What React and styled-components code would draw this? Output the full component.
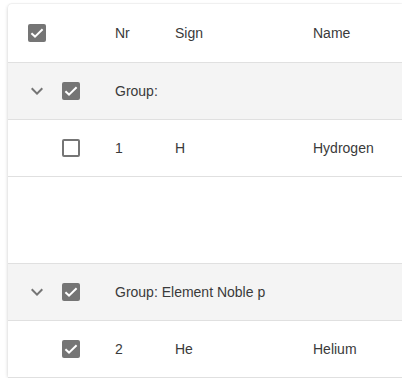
import React from 'react';
import styled, { createGlobalStyle } from 'styled-components';

const GlobalStyle = createGlobalStyle`
  body {
    margin: 0;
    overflow: hidden;
    background: #ffffff;
    font-family: 'Liberation Sans', Arial, sans-serif;
  }
`;

const Card = styled.div`
  margin: 4px 0 0 8px;
  width: 394px;
  background: #ffffff;
  border-radius: 4px 0 0 4px;
  box-shadow: -1px 1px 3px rgba(0, 0, 0, 0.12), 0 -1px 1px rgba(0, 0, 0, 0.05);
  font-size: 14px;
  color: #3a3a3a;
`;

const HeaderRow = styled.div`
  display: grid;
  grid-template-columns: 87px 60px 138px 1fr;
  align-items: center;
  height: 58px;
  padding-left: 20px;
  border-bottom: 1px solid #e0e0e0;
`;

const Row = styled.div`
  display: grid;
  grid-template-columns: 54px 53px 60px 138px 1fr;
  align-items: center;
  height: 56px;
  background: ${(p) => (p.group ? '#f4f4f4' : '#ffffff')};
  border-bottom: 1px solid #e0e0e0;
`;

const Spacer = styled.div`
  height: 86px;
  border-bottom: 1px solid #e0e0e0;
`;

const Cell = styled.div`
  white-space: nowrap;
  overflow: hidden;
`;

const GroupLabel = styled.div`
  grid-column: 3 / span 3;
  white-space: nowrap;
  overflow: hidden;
`;

const Expand = styled.div`
  display: flex;
  align-items: center;
  padding-left: 17px;
`;

const Box = styled.span`
  display: inline-flex;
  align-items: center;
  justify-content: center;
  vertical-align: middle;
  width: 18px;
  height: 18px;
  box-sizing: border-box;
  border-radius: 2px;
  background: ${(p) => (p.checked ? '#757575' : 'transparent')};
  border: ${(p) => (p.checked ? 'none' : '2px solid #757575')};
`;

const BoxCell = styled.div`
  display: flex;
  align-items: center;
`;

function Checkbox({ checked }) {
  return (
    <Box checked={checked}>
      {checked && (
        <svg width="18" height="18" viewBox="0 0 18 18">
          <path
            d="M3.4 9.2 L7 12.6 L14.6 5.2"
            fill="none"
            stroke="#ffffff"
            strokeWidth="2"
          />
        </svg>
      )}
    </Box>
  );
}

function Chevron() {
  return (
    <svg width="24" height="24" viewBox="0 0 24 24">
      <path d="M16.59 8.59L12 13.17 7.41 8.59 6 10l6 6 6-6z" fill="#757575" />
    </svg>
  );
}

const groups = [
  { label: 'Group:', rows: [{ nr: 1, sign: 'H', name: 'Hydrogen', checked: false }] },
  { label: 'Group: Element Noble p', rows: [{ nr: 2, sign: 'He', name: 'Helium', checked: true }] },
];

export default function App() {
  return (
    <>
      <GlobalStyle />
      <Card>
        <HeaderRow>
          <BoxCell>
            <Checkbox checked />
          </BoxCell>
          <Cell>Nr</Cell>
          <Cell>Sign</Cell>
          <Cell>Name</Cell>
        </HeaderRow>
        {groups.map((g, i) => (
          <React.Fragment key={g.label}>
            {i > 0 && <Spacer />}
            <Row group>
              <Expand>
                <Chevron />
              </Expand>
              <BoxCell>
                <Checkbox checked />
              </BoxCell>
              <GroupLabel>{g.label}</GroupLabel>
            </Row>
            {g.rows.map((r) => (
              <Row key={r.nr}>
                <div />
                <BoxCell>
                  <Checkbox checked={r.checked} />
                </BoxCell>
                <Cell>{r.nr}</Cell>
                <Cell>{r.sign}</Cell>
                <Cell>{r.name}</Cell>
              </Row>
            ))}
          </React.Fragment>
        ))}
      </Card>
    </>
  );
}
